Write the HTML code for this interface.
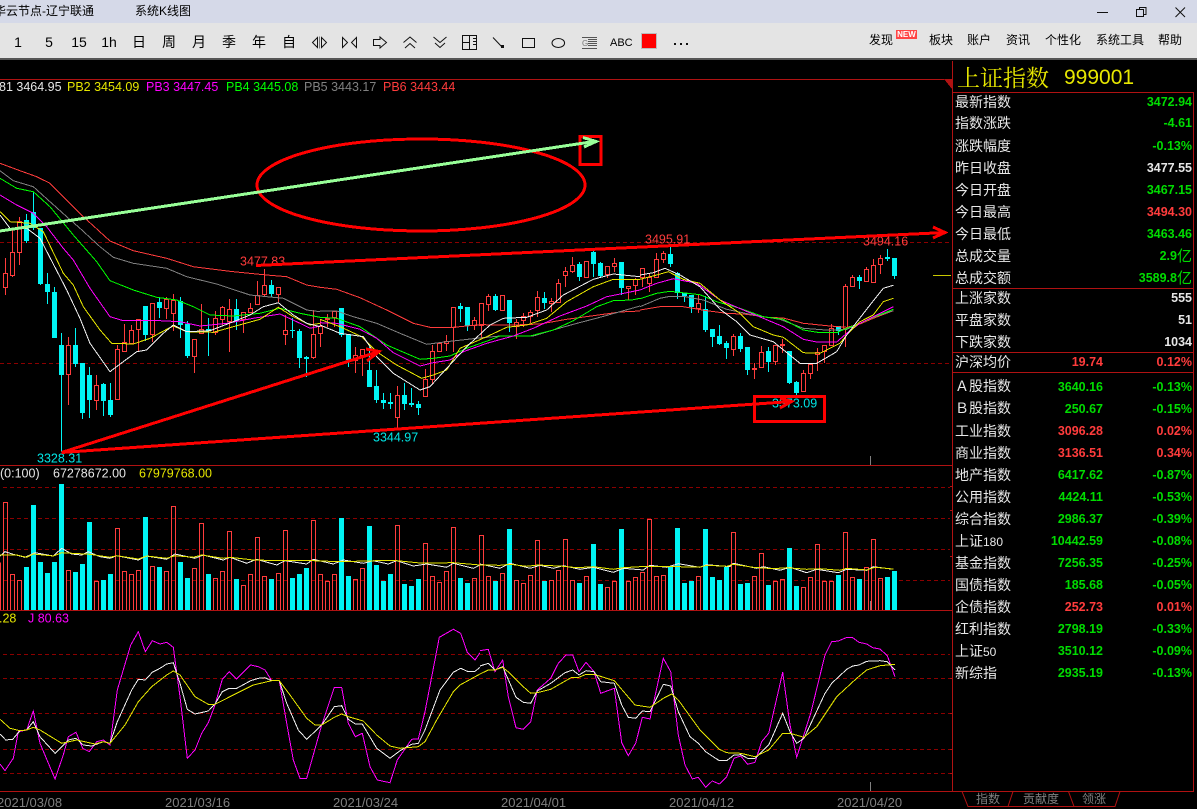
<!DOCTYPE html>
<html lang="zh">
<head>
<meta charset="utf-8">
<title>系统K线图</title>
<style>
html,body{margin:0;padding:0;background:#000;width:1197px;height:809px;overflow:hidden}
body{position:relative;font-family:"Liberation Sans","WenQuanYi Zen Hei","Noto Sans CJK SC",sans-serif}
#tb{position:absolute;left:0;top:0;width:1197px;height:23px;background:#d5d9e8}
#bar{position:absolute;left:0;top:23px;width:1197px;height:35px;background:#e4e4e4}
#sep{position:absolute;left:0;top:58px;width:1197px;height:2px;background:#555}
.t{position:absolute;color:#000;font-size:12px;line-height:14px;white-space:nowrap;font-family:"Liberation Sans","WenQuanYi Zen Hei","Noto Sans CJK SC",sans-serif}
.i{position:absolute;top:34px;width:24px;text-align:center;color:#000;font-size:14px;line-height:17px;font-family:"Liberation Sans","WenQuanYi Zen Hei","Noto Sans CJK SC",sans-serif}
#new{position:absolute;left:896px;top:30px;width:21px;height:9px;background:#f44;color:#fff;font:bold 8px/9px "Liberation Sans",sans-serif;text-align:center}
#sq{position:absolute;left:641px;top:33px;width:14px;height:14px;background:#f00;border:1px solid #bbb}
svg{position:absolute;left:0;top:0}
.l,.m,.r{position:absolute;height:16px;line-height:16px;white-space:nowrap}
.l{left:955px;color:#e8e8e8;font-size:14px;font-family:"WenQuanYi Zen Hei","Noto Sans CJK SC",sans-serif}
.l small{font:12px "Liberation Sans",sans-serif}
.m,.r{font-weight:bold;font-size:12.5px}
.m{right:94px}
.r{right:5px}
.g{color:#00dc00}.w{color:#e6e6e6}.d{color:#ff3c3c}
.r b{font:15px/0 "WenQuanYi Zen Hei","Noto Sans CJK SC",sans-serif;vertical-align:-1px}
#ttl{position:absolute;left:957px;top:63px;color:#e6e600;font-size:23px;line-height:28px;white-space:nowrap;font-family:"Noto Serif CJK SC","WenQuanYi Zen Hei",serif}
#ttl2{position:absolute;left:1064px;top:65px;color:#e6e600;font-size:21px;line-height:26px;font-family:"Liberation Sans",sans-serif}
.tab{position:absolute;top:792px;color:#808080;font-size:12px;line-height:14px;font-family:"WenQuanYi Zen Hei","Noto Sans CJK SC",sans-serif}
</style>
</head>
<body>
<div id="tb"></div>
<div id="bar"></div>
<div id="sep"></div>
<div class="t" style="left:-6px;top:4px">华云节点-辽宁联通</div>
<div class="t" style="left:135px;top:4px">系统K线图</div>

<div class="i" style="left:6px">1</div>
<div class="i" style="left:37px">5</div>
<div class="i" style="left:67px">15</div>
<div class="i" style="left:97px">1h</div>
<div class="i" style="left:127px">日</div>
<div class="i" style="left:157px">周</div>
<div class="i" style="left:187px">月</div>
<div class="i" style="left:217px">季</div>
<div class="i" style="left:247px">年</div>
<div class="i" style="left:277px">自</div>
<div class="t" style="left:610px;top:36px;font-size:11px">ABC</div>
<div id="sq"></div>
<div class="t" style="left:869px;top:33px">发现</div>
<div id="new">NEW</div>
<div class="t" style="left:929px;top:33px">板块</div>
<div class="t" style="left:967px;top:33px">账户</div>
<div class="t" style="left:1006px;top:33px">资讯</div>
<div class="t" style="left:1045px;top:33px">个性化</div>
<div class="t" style="left:1096px;top:33px">系统工具</div>
<div class="t" style="left:1158px;top:33px">帮助</div>

<svg id="s" width="1197" height="809" viewBox="0 0 1197 809" xmlns="http://www.w3.org/2000/svg" shape-rendering="crispEdges">
  <!-- window controls -->
  <g fill="none" stroke="#111" stroke-width="1">
    <path d="M1097 12.5H1108"/>
    <path d="M1136.5 9.5h7v7h-7zM1139.5 9.5V7.5h6.5v7h-2.5"/>
    <path d="M1175.5 7.5l9.5 9.5M1185 7.5l-9.5 9.5" shape-rendering="auto"/>
  </g>
  <!-- toolbar icons -->
  <g fill="none" stroke="#111" stroke-width="1" shape-rendering="auto">
    <path d="M317.5 37.5L312.5 42.5L317.5 47.5ZM321.5 37.5L326.5 42.5L321.5 47.5Z"/>
    <path d="M319.5 36.5V48.5" stroke="#777"/>
    <path d="M342.5 37.5L347.5 42.5L342.5 47.5ZM356.5 37.5L351.5 42.5L356.5 47.5Z"/>
    <path d="M373.5 39.5H380V37L386.5 42.5L380 48V45.5H373.5Z"/>
    <path d="M403.5 42.5L410 37L416.5 42.5M405 48L410 43.5L415 48"/>
    <path d="M433.5 37L440 42.5L446.5 37M435 43L440 47.5L445 43"/>
    <path d="M462.5 35.5H476.5V49.5H462.5ZM469.5 35.5V49.5M462.5 42.5H469.5" shape-rendering="crispEdges"/>
    <path d="M473 38.5H476M473 41.5H476M473 44.5H476" shape-rendering="crispEdges"/>
    <path d="M493 37.5L502 47"/>
    <rect x="501" y="45" width="3" height="3" fill="#111" stroke="none"/>
    <rect x="522.5" y="38.5" width="12" height="9" shape-rendering="crispEdges"/>
    <ellipse cx="558.3" cy="43" rx="6.3" ry="4.5"/>
    <path d="M582 37.5H597M588 39.5H597M588 41.5H597M588 43.5H597M588 45.5H597M582 48.5H597" stroke="#555" shape-rendering="crispEdges"/>
  </g>
  <text x="582" y="46" font-family="Liberation Sans" font-size="8" fill="#777">G</text>
  <path d="M674 43h2v2h-2zM680 43h2v2h-2zM686 43h2v2h-2z" fill="#111"/>

  <!-- dashed grids -->
  <g stroke="#8b0000" stroke-width="1" stroke-dasharray="4 3" fill="none">
    <path d="M0 242.5H950M0 363.5H950"/>
    <path d="M3 487.5H950M3 518.5H950M3 549.5H950M3 580.5H950"/>
    <path d="M3 654.5H950M3 678.5H950M3 713.5H950M3 749.5H950M3 773.5H950"/>
  </g>
  <g id="vol"></g>
  <g id="can"></g>
  <g id="lin" fill="none"></g>

  <!-- panel lines -->
  <g stroke="#b01212" stroke-width="1" fill="none">
    <path d="M0 79.5H944M0 465.5H952M0 610.5H952M0 791.5H952"/>
    <path d="M952.5 61V792"/>
    <path d="M952.5 92.5H1193.5V791.5H952.5M952.5 288.5H1193.5M952.5 352.5H1193.5M952.5 372.5H1193.5"/>
    <path d="M950 465.5h2M950 486.5h2M950 510.5h2M950 556.5h2M950 610.5h2M950 678.5h2M950 713.5h2M950 749.5h2M950 773.5h2"/>
    <path d="M952.5 791.5H962L968 806.5H1008L1013 791.5H1120M1008 806.5H1074L1068.5 791.5M1074 806.5H1115L1120 791.5" shape-rendering="auto"/>
    <path d="M1120 791.5H1193.5"/>
  </g>
  <path d="M944 79H952V89Z" fill="#b01212"/>
  <path d="M933 275.5H951" stroke="#c8c800" stroke-width="1"/>
  <path d="M870.5 456V465M870.5 601V610M870.5 782V791" stroke="#808080" stroke-width="1"/>

  <!-- chart text -->
  <g font-family="Liberation Sans" font-size="12.5">
    <text x="-1" y="91" fill="#e6e6e6">81 3464.95</text>
    <text x="67" y="91" fill="#e6e600">PB2 3454.09</text>
    <text x="146" y="91" fill="#ff00ff">PB3 3447.45</text>
    <text x="226" y="91" fill="#00ff00">PB4 3445.08</text>
    <text x="304" y="91" fill="#808080">PB5 3443.17</text>
    <text x="383" y="91" fill="#ff3c3c">PB6 3443.44</text>
    <text x="240" y="265.500" fill="#ff3c3c">3477.83</text>
    <text x="645" y="243.500" fill="#ff3c3c">3495.91</text>
    <text x="863" y="245.500" fill="#ff3c3c">3494.16</text>
    <text x="373" y="441.500" fill="#00e6e6">3344.97</text>
    <text x="37" y="462.500" fill="#00e6e6">3328.31</text>
    <text x="772" y="407.500" fill="#00e6e6">3373.09</text>
    <text x="0" y="477.500" fill="#e6e6e6">(0:100)</text>
    <text x="53" y="477.500" fill="#e6e6e6">67278672.00</text>
    <text x="139" y="477.500" fill="#e6e600">67979768.00</text>
    <text x="-1" y="622.500" fill="#e6e600">.28</text>
    <text x="28" y="622.500" fill="#ff00ff">J 80.63</text>
    <g fill="#808080" font-size="13">
      <text x="-3" y="807">2021/03/08</text>
      <text x="165" y="807">2021/03/16</text>
      <text x="333" y="807">2021/03/24</text>
      <text x="501" y="807">2021/04/01</text>
      <text x="669" y="807">2021/04/12</text>
      <text x="837" y="807">2021/04/20</text>
    </g>
  </g>

  <!-- hand-drawn annotations -->
  <g fill="none" stroke="#ff0000" stroke-width="3">
    <ellipse cx="421" cy="185" rx="164" ry="46"/>
    <rect x="580" y="136.500" width="21" height="28"/>
    <rect x="754.500" y="396.500" width="70" height="25"/>
    <path d="M256 265.500L945 232.500M933 227L945 232.500L933 238"/>
    <path d="M61.500 452.500L379 351.500M366 349L379 351.500L367 361"/>
    <path d="M61.500 452.500L791.500 401.500M780 398L791.500 401.500L780 408"/>
  </g>
  <path d="M0 231L594 141.500M583 137.500L596 141.500L584 147" fill="none" stroke="#98ff98" stroke-width="3"/>
</svg>

<div id="ttl">上证指数</div>
<div id="ttl2">999001</div>

<div class="l" style="top:94px">最新指数</div><div class="r g" style="top:94px">3472.94</div>
<div class="l" style="top:115px">指数涨跌</div><div class="r g" style="top:115px">-4.61</div>
<div class="l" style="top:138px">涨跌幅度</div><div class="r g" style="top:138px">-0.13%</div>
<div class="l" style="top:160px">昨日收盘</div><div class="r w" style="top:160px">3477.55</div>
<div class="l" style="top:182px">今日开盘</div><div class="r g" style="top:182px">3467.15</div>
<div class="l" style="top:204px">今日最高</div><div class="r d" style="top:204px">3494.30</div>
<div class="l" style="top:226px">今日最低</div><div class="r g" style="top:226px">3463.46</div>
<div class="l" style="top:248px">总成交量</div><div class="r g" style="top:248px">2.9<b>亿</b></div>
<div class="l" style="top:270px">总成交额</div><div class="r g" style="top:270px">3589.8<b>亿</b></div>
<div class="l" style="top:290px">上涨家数</div><div class="r w" style="top:290px">555</div>
<div class="l" style="top:312px">平盘家数</div><div class="r w" style="top:312px">51</div>
<div class="l" style="top:334px">下跌家数</div><div class="r w" style="top:334px">1034</div>
<div class="l" style="top:354px">沪深均价</div><div class="m d" style="top:354px">19.74</div><div class="r d" style="top:354px">0.12%</div>

<div class="l" style="top:378px">Ａ股指数</div><div class="m g" style="top:379px">3640.16</div><div class="r g" style="top:379px">-0.13%</div>
<div class="l" style="top:400px">Ｂ股指数</div><div class="m g" style="top:401px">250.67</div><div class="r g" style="top:401px">-0.15%</div>
<div class="l" style="top:423px">工业指数</div><div class="m d" style="top:423px">3096.28</div><div class="r d" style="top:423px">0.02%</div>
<div class="l" style="top:445px">商业指数</div><div class="m d" style="top:445px">3136.51</div><div class="r d" style="top:445px">0.34%</div>
<div class="l" style="top:467px">地产指数</div><div class="m g" style="top:467px">6417.62</div><div class="r g" style="top:467px">-0.87%</div>
<div class="l" style="top:489px">公用指数</div><div class="m g" style="top:489px">4424.11</div><div class="r g" style="top:489px">-0.53%</div>
<div class="l" style="top:511px">综合指数</div><div class="m g" style="top:511px">2986.37</div><div class="r g" style="top:511px">-0.39%</div>
<div class="l" style="top:533px">上证<small>180</small></div><div class="m g" style="top:533px">10442.59</div><div class="r g" style="top:533px">-0.08%</div>
<div class="l" style="top:555px">基金指数</div><div class="m g" style="top:555px">7256.35</div><div class="r g" style="top:555px">-0.25%</div>
<div class="l" style="top:577px">国债指数</div><div class="m g" style="top:577px">185.68</div><div class="r g" style="top:577px">-0.05%</div>
<div class="l" style="top:599px">企债指数</div><div class="m d" style="top:599px">252.73</div><div class="r d" style="top:599px">0.01%</div>
<div class="l" style="top:621px">红利指数</div><div class="m g" style="top:621px">2798.19</div><div class="r g" style="top:621px">-0.33%</div>
<div class="l" style="top:643px">上证<small>50</small></div><div class="m g" style="top:643px">3510.12</div><div class="r g" style="top:643px">-0.09%</div>
<div class="l" style="top:665px">新综指</div><div class="m g" style="top:665px">2935.19</div><div class="r g" style="top:665px">-0.13%</div>

<div class="tab" style="left:976px">指数</div>
<div class="tab" style="left:1023px">贡献度</div>
<div class="tab" style="left:1082px">领涨</div>

<script>
(function(){
var NS='http://www.w3.org/2000/svg';
function el(p,n,a){var e=document.createElementNS(NS,n);for(var k in a)e.setAttribute(k,a[k]);p.appendChild(e);return e;}
var RED='#ff3c3c',CY='#00f5f5';
var V6=[1,127,1,343,1,361,0,321,0,135,0,306,0,339,0,306,0,72,1,331,0,336,0,312,0,186,1,364,0,360,0,342,1,205,1,334,1,343,1,331,0,171,1,319,0,321,1,334,1,139,0,306,0,354,1,325,1,190,0,342,1,355,1,334,1,214,0,357,1,376,1,343,1,232,1,349,0,357,1,340,1,211,0,354,0,342,0,324,1,181,1,343,1,364,1,343,0,174,0,348,1,358,1,325,0,198,0,315,0,363,0,342,1,196,0,372,0,378,0,357,1,250,1,349,1,367,1,334,1,202,0,354,0,369,1,355,1,226,
1,349,0,363,1,340,0,207,1,361,1,370,1,346,1,241,0,363,1,361,1,331,1,238,1,361,0,369,1,349,0,252,0,372,1,382,1,364,0,207,1,364,1,352,1,337,1,178,1,349,1,346,0,322,0,204,0,369,0,363,1,349,0,207,0,351,0,360,0,320,1,217,0,372,0,369,1,349,1,280,0,375,1,364,1,358,0,264,0,378,1,382,1,352,1,253,1,364,1,364,0,345,1,217,1,352,0,357,1,322,1,238,1,355,0,351,0,333];
var g=document.getElementById('vol'),pr='',pc='';
function cell(i){return 3+7*i;}
el(g,'rect',{x:-3.5,y:563,width:4,height:47,fill:'none',stroke:RED});
for(var i=0;i<V6.length/2;i++){
  var r=V6[2*i],t=Math.round(460+V6[2*i+1]/3),x=cell(i);
  if(r)pr+='M'+(x+.5)+' 610V'+(t+.5)+'H'+(x+4.5)+'V610';
  else pc+='M'+x+' '+t+'h5V610h-5z';
}
el(g,'path',{d:pr,fill:'none',stroke:RED});
el(g,'path',{d:pc,fill:CY});

var C=[
[0,160,[1,340,382,293,404, 1,277,344,207,352, 1,183,277,172,315, 0,180,243,162,250, 0,155,205,95,210, 0,205,372,205,375, 0,372,395,340,432, 0,396,533,382,535, 0,555,645,520,875, 1,555,643,530,735, 0,555,612,505,620, 0,609,758,609,776, 0,645,719,620,773, 1,676,719,645,750, 0,672,722,668,767, 0,720,765,670,772, 1,568,718,555,718, 1,547,572,492,572, 1,511,549,495,550, 1,478,508,478,573, 0,438,525,438,543, 1,430,521,430,545, 0,426,444,412,474, 1,418,444,412,476, 1,421,458,402,512, 0,423,495,411,533, 0,492,588,483,594, 1,538,587,538,638, 1,508,520,432,520, 0,508,512,474,588, 1,475,515,452,525, 1,442,476,438,495, 1,448,484,417,575, 0,447,483,417,510, 1,455,478,455,518, 1,445,456,430,460, 1,404,431,363,431, 1,376,402,327,410, 0,376,402,360,410, 1,382,401,382,425, 1,511,523,465,555, 0,510,514,474,535, 0,513,594,507,624, 0,592,596,587,650, 1,523,590,450,596]],
[45,230,[1,288,310,270,352, 1,263,267,252,290, 1,243,261,243,290, 0,234,315,234,322, 0,312,390,312,410, 1,376,390,350,428, 1,358,376,358,437, 0,420,470,350,470, 0,468,510,420,520, 0,510,518,490,537, 0,516,522,490,538, 1,496,562,468,595, 0,495,522,460,540, 0,520,525,474,530, 0,522,533,513,555, 1,447,497,417,497, 1,364,448,344,462, 1,338,362,335,365, 1,334,338,316,362, 1,232,290,230,365, 0,229,236,220,275, 0,232,287,232,302, 1,271,286,262,300, 1,220,285,220,325, 1,199,221,193,242, 0,198,240,192,243, 1,196,240,196,242, 0,210,280,210,305, 1,276,288,268,327, 1,257,271,250,290, 1,246,259,240,280, 1,202,240,183,260, 0,204,220,186,238, 1,212,218,205,245, 1,160,215,147,215, 1,124,136,110,172, 1,106,122,82,128, 0,103,140,97,152, 1,94,140,94,142, 0,66,101,63,140, 0,99,137,97,143, 1,109,132,109,143, 1,100,109,84,126, 0,97,173,97,195, 1,167,173,167,210, 1,148,166,145,195]],
[91,220,[1,143,170,143,200, 1,170,188,160,215, 1,118,170,100,175, 1,100,118,92,128, 0,102,132,82,140, 0,158,218,155,236, 0,218,228,218,246, 0,225,262,225,278, 1,248,263,225,278, 0,266,330,228,336, 0,328,350,328,380, 0,349,372,316,375, 0,370,384,362,417, 1,349,388,342,408, 0,349,388,340,395, 0,382,449,382,465, 1,443,447,430,478, 1,395,442,378,442, 0,394,426,382,456, 1,374,422,374,436, 1,371,374,356,398, 0,394,489,394,492, 0,486,518,483,524, 1,460,514,450,514, 1,433,460,430,476, 1,395,403,384,452, 1,376,394,376,430, 1,323,376,312,376, 0,318,333,318,346, 1,199,325,192,380, 1,172,199,165,200, 0,171,182,165,208, 1,148,182,142,186, 1,136,187,116,188, 1,113,133,105,162, 0,112,116,88,124, 0,114,167,114,176]]
];
g=document.getElementById('can');var wr='',wc='',br='',bc='';
br+='M-4.5 239.5h4v19h-4z';
C.forEach(function(S){var i0=S[0],oy=S[1],d=S[2];
  for(var k=0;k<d.length/5;k++){
    var x=cell(i0+k),red=d[5*k],t=Math.round(oy+d[5*k+1]/3),b=Math.round(oy+d[5*k+2]/3),wt=Math.round(oy+d[5*k+3]/3),wb=Math.round(oy+d[5*k+4]/3);
    if(b<=t)b=t+1;
    if(red){
      br+='M'+(x+.5)+' '+(t+.5)+'h4V'+(b+.5)+'h-4z';
      if(wt<t)wr+='M'+(x+2.5)+' '+wt+'V'+t;
      if(wb>b)wr+='M'+(x+2.5)+' '+b+'V'+wb;
    }else{
      bc+='M'+x+' '+t+'h5V'+b+'h-5z';
      wc+='M'+(x+2.5)+' '+wt+'V'+wb;
    }
  }
});
el(g,'path',{d:wc,stroke:CY,fill:'none'});
el(g,'path',{d:bc,fill:CY});
el(g,'path',{d:wr,stroke:RED,fill:'none'});
el(g,'path',{d:br,stroke:RED,fill:'none'});

g=document.getElementById('lin');
function L(ox,oy,c,w,p){
  var s='';for(var i=0;i<p.length;i+=2){s+=(i?'L':'M')+(ox+p[i]/3).toFixed(1)+' '+(oy+p[i+1]/3).toFixed(1);}
  el(g,'path',{d:s,stroke:c,'stroke-width':w,'shape-rendering':'crispEdges'});
}
var MAs=[
['#ff3c3c',[0,10,60,32,110,50,150,70,210,130,250,170,330,243,400,272,500,295,580,320,700,335,800,345,860,350,920,375,960,382],
 [0,172,50,178,120,203,200,240,280,280,330,292,400,292,480,284,580,285,660,282,740,268,820,257,900,246,960,243],
 [0,270,60,260,130,260,200,272,260,280,320,283,380,292,430,294,490,310,570,318,620,322,660,312,700,295,760,272]],
['#808080',[0,32,40,62,100,80,150,125,200,170,240,205,300,260,340,292,400,310,500,325,560,350,650,372,750,405,850,415,920,450,960,455],
 [0,243,50,243,100,260,170,280,240,310,320,343,380,335,470,325,540,318,640,318,700,300,760,283,840,262,900,245,960,228],
 [0,260,60,235,90,229,130,229,190,240,260,268,340,285,420,298,490,325,570,331,620,328,660,310,700,292,760,272]],
['#00ff00',[0,55,50,85,100,95,150,140,220,225,290,305,330,362,400,390,470,412,530,420,580,440,630,465,700,468,780,460,840,445,900,460,960,472],
 [0,262,50,265,120,290,200,345,300,388,340,385,390,378,440,355,510,330,540,318,630,318,700,300,760,272,830,230,880,212,935,210,960,205],
 [0,236,50,220,90,214,180,224,230,245,300,265,370,290,430,298,490,330,540,338,590,338,620,325,660,310,700,292,760,268]],
['#ff00ff',[0,105,50,135,100,160,140,200,190,265,220,300,270,385,330,470,370,482,480,482,540,485,600,498,680,490,760,475,840,462,900,490,930,505,960,498],
 [0,278,50,280,120,298,170,325,220,368,300,408,340,398,390,390,430,365,500,340,580,318,640,295,720,258,800,228,860,200,960,180],
 [0,210,50,190,100,176,170,190,240,240,310,270,370,295,430,320,490,358,530,366,590,366,620,340,660,310,700,290,760,260]],
['#e6e600',[0,155,30,185,90,190,130,215,190,340,220,375,250,440,300,510,335,550,400,552,450,535,500,508,520,498,560,515,640,517,700,500,780,478,835,442,880,470,930,495,960,490],
 [0,268,60,290,125,320,170,365,230,405,305,445,340,435,380,420,420,355,500,320,560,292,620,285,680,265,740,215,820,170,880,148,960,148],
 [0,178,50,165,85,155,130,178,180,190,240,240,300,280,340,320,400,345,430,352,490,398,540,400,600,370,620,345,660,305,700,285,730,245,760,235]],
['#f0f0f0',[0,165,30,205,80,205,120,235,200,390,240,475,270,550,330,635,370,605,410,575,440,570,490,520,520,495,560,515,630,512,700,485,750,465,790,440,835,428,880,465,920,490,960,500],
 [0,285,60,310,130,320,170,380,220,430,300,480,330,470,380,415,440,350,510,285,550,265,620,262,680,240,730,195,820,148,880,132,960,140],
 [0,165,40,158,75,145,120,165,180,200,240,268,290,305,330,345,400,365,480,430,530,430,590,395,620,345,690,255,730,205,760,196]]
];
MAs.forEach(function(m){L(0,160,m[0],1,m[1]);L(320,230,m[0],1,m[2]);L(640,220,m[0],1,m[3]);});

L(0,460,'#f0f0f0',1,[0,288,15,275,40,283,75,292,105,278,160,288,185,265,215,282,245,285,265,275,300,290,330,295,350,287,415,300,440,288,500,298,525,282,585,295,610,285,670,300,690,292,740,310,770,298,830,315,855,302,920,312,940,298,1000,312,1030,300,1090,310,1120,302,1165,312,1190,302,1240,318,1280,312,1340,322,1360,310,1420,325,1440,315]);
L(480,460,'#f0f0f0',1,[0,312,60,325,90,310,150,325,180,316,220,325,250,317,300,328,340,322,400,337,430,325,490,330,510,316,560,322,595,311,660,322,680,314,750,320,760,310,830,325,850,320,900,331,930,322,980,338,1010,328,1075,338,1100,328,1160,331,1180,320,1240,328]);
L(0,460,'#e6e600',1,[0,285,50,285,80,292,100,282,160,288,185,278,270,283,330,292,350,287,415,297,440,288,500,295,525,287,580,292,605,285,670,295,690,292,760,300,850,302,940,302,1020,305,1130,302,1190,302,1260,309,1360,308,1440,315]);
L(480,460,'#e6e600',1,[0,315,60,316,90,313,140,319,175,315,250,319,290,323,340,320,400,328,430,323,500,319,660,321,680,316,740,319,760,313,820,322,880,326,920,323,980,328,1020,326,1080,331,1100,325,1160,330,1185,322,1240,327]);

L(0,610,'#ff00ff',1,[0,462,15,482,40,445,55,365,80,360,100,303,120,400,165,507,190,435,205,380,228,367,248,415,268,425,290,395,310,390,330,405,352,240,392,105,415,65,436,125,457,92,480,102,500,97,520,112,540,260,562,445,585,420,605,370,625,338,645,285,667,208,688,185,710,207,752,165,775,170,795,180,815,212,838,212,860,340,880,450,900,505,920,505,965,345,1003,232,1025,233,1045,340,1066,380,1087,370,1110,470,1132,510,1170,518,1192,450,1235,388,1255,387,1275,305,1318,82,1360,58,1382,70,1402,127,1425,150,1440,128]);
L(480,610,'#ff00ff',1,[0,122,25,118,45,185,68,150,85,260,108,353,130,358,152,335,172,240,212,205,235,160,258,135,278,135,297,185,318,157,342,185,362,250,403,235,425,398,445,437,467,400,487,322,510,327,550,145,572,185,595,375,615,465,637,507,655,502,677,532,697,513,718,522,740,500,762,445,782,438,803,463,825,457,845,395,866,370,908,187,930,345,950,442,992,310,1035,135,1055,95,1075,93,1098,83,1118,83,1137,97,1160,102,1178,113,1200,117,1222,137,1245,200]);
L(0,610,'#f0f0f0',1,[0,372,17,390,38,388,60,362,80,360,100,335,120,380,165,430,205,390,228,385,250,405,275,408,310,395,330,400,352,335,395,240,415,208,436,210,457,187,480,175,500,162,520,158,540,220,562,298,585,312,625,303,645,282,667,245,688,235,710,235,752,212,775,205,795,203,815,212,838,212,860,280,895,360,920,388,965,345,1003,290,1025,287,1045,328,1066,342,1087,342,1130,415,1170,445,1200,422,1235,403,1255,400,1275,360,1320,240,1360,187,1382,175,1402,184,1425,184,1440,172]);
L(480,610,'#f0f0f0',1,[0,168,25,160,45,180,68,170,108,262,130,277,152,280,172,243,212,220,255,188,278,180,297,195,318,182,342,185,362,215,403,220,425,285,445,322,467,325,487,303,510,305,550,223,572,228,595,305,630,380,655,400,677,425,718,452,740,452,762,435,782,434,803,445,825,445,845,425,866,405,908,310,930,365,950,400,972,385,1035,250,1055,220,1100,178,1118,168,1137,165,1160,154,1200,152,1222,155,1245,180]);
L(0,610,'#e6e600',1,[0,328,30,355,60,362,80,360,100,352,120,360,185,400,230,390,285,402,310,395,330,400,375,345,415,275,455,230,500,195,520,183,540,195,585,260,625,283,645,283,700,255,760,225,815,212,838,212,870,255,920,325,945,345,965,345,1003,322,1025,312,1045,320,1090,333,1130,375,1170,408,1200,415,1255,410,1275,395,1310,330,1360,245,1380,225,1440,192]);
L(480,610,'#e6e600',1,[0,192,25,180,45,180,68,172,90,190,130,230,152,250,172,248,212,238,275,202,297,202,318,193,342,193,403,212,465,285,510,292,550,265,575,252,595,270,660,360,718,418,740,428,782,430,825,440,866,420,908,370,930,370,972,382,1010,350,1070,260,1130,205,1160,180,1200,167,1245,163]);
})();
</script>
</body>
</html>
